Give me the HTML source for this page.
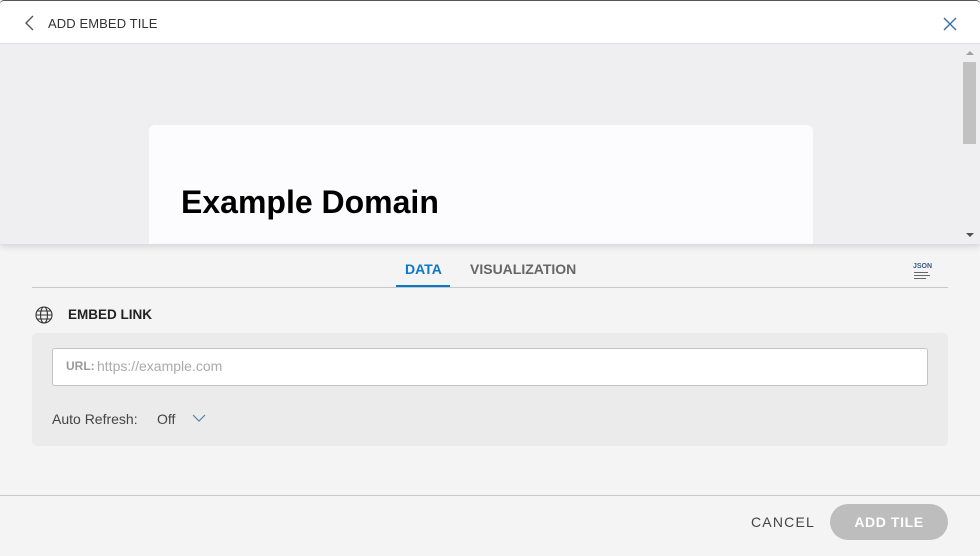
<!DOCTYPE html>
<html><head><style>
*{margin:0;padding:0;box-sizing:border-box}
body{width:980px;height:556px;overflow:hidden;background:#f4f4f4;font-family:"Liberation Sans",sans-serif;position:relative;color:#333}
.hdr{position:absolute;left:0;top:0;width:980px;height:44px;background:#fff;border-top:1px solid #555;border-radius:4px 4px 0 0;border-bottom:1px solid #e4e4e4}
.prev{position:absolute;left:0;top:44px;width:980px;height:200px;background:#efeff1;box-shadow:0 3px 6px rgba(0,0,0,.12);overflow:hidden}
.card{position:absolute;left:149px;top:81px;width:664px;height:140px;background:#fcfcfe;border-radius:6px}
.card h1{position:absolute;left:32px;top:59px;font-size:32px;font-weight:bold;color:#000;font-family:"Liberation Sans",sans-serif;letter-spacing:0}
.sb{position:absolute;left:962px;top:0;width:16px;height:200px;background:#efeff1}
.thumb{position:absolute;left:963px;top:62px;width:13px;height:82px;background:#c1c1c1}
.t{position:absolute;font-size:14px}
</style></head><body>
<div class="hdr">
<svg style="position:absolute;left:24px;top:14px" width="12" height="16"><path d="M9 1 L2 8 L9 15" fill="none" stroke="#555" stroke-width="1.4"/></svg>
<div class="t" style="left:48px;top:15px;font-size:13px;color:#333;letter-spacing:.1px">ADD EMBED TILE</div>
<svg style="position:absolute;left:943px;top:16px" width="14" height="14"><path d="M1 1L13 13M13 1L1 13" stroke="#3a6ea5" stroke-width="1.4"/></svg>
</div>
<div class="prev">
<div class="card"><h1>Example Domain</h1></div>
<div class="sb"></div>
<svg style="position:absolute;left:966px;top:6px" width="8" height="6"><path d="M0 5L4 1L8 5Z" fill="#a0a0a0"/></svg>
<svg style="position:absolute;left:966px;top:188px" width="8" height="6"><path d="M0 1L4 5L8 1Z" fill="#505050"/></svg>
</div>
<div class="thumb"></div>
<div class="t" style="left:405px;top:261px;color:#0a78c8;font-size:14px;font-weight:bold">DATA</div>
<div style="position:absolute;left:396px;top:285px;width:54px;height:3px;background:#0a78c8"></div>
<div class="t" style="left:470px;top:261px;color:#666;font-size:14px;font-weight:bold">VISUALIZATION</div>
<div style="position:absolute;left:913px;top:263px;font-size:7px;color:#3a5a8a;font-weight:bold">JSON</div>
<div style="position:absolute;left:914px;top:272px;width:14px;height:1px;background:#666"></div>
<div style="position:absolute;left:914px;top:275px;width:16px;height:1px;background:#666"></div>
<div style="position:absolute;left:914px;top:278px;width:12px;height:1px;background:#666"></div>
<div style="position:absolute;left:32px;top:287px;width:916px;height:1px;background:#c8c8c8"></div>
<svg style="position:absolute;left:35px;top:306px" width="18" height="18" viewBox="0 0 18 18" fill="none" stroke="#333" stroke-width="1.1"><circle cx="9" cy="9" r="8"/><ellipse cx="9" cy="9" rx="3.5" ry="8"/><path d="M1 9H17M2.5 5H15.5M2.5 13H15.5"/></svg>
<div class="t" style="left:68px;top:307px;color:#222;font-weight:bold;font-size:13.5px">EMBED LINK</div>
<div style="position:absolute;left:32px;top:333px;width:916px;height:113px;background:#ebebeb;border-radius:5px"></div>
<div style="position:absolute;left:52px;top:348px;width:876px;height:38px;background:#fff;border:1px solid #c4c4c4;border-radius:3px"></div>
<div class="t" style="left:66px;top:359px;font-size:12px;font-weight:bold;color:#999">URL:</div>
<div class="t" style="left:97px;top:358px;color:#aaa">https://example.com</div>
<div class="t" style="left:52px;top:411px;color:#444">Auto Refresh:</div>
<div class="t" style="left:157px;top:411px;color:#444">Off</div>
<svg style="position:absolute;left:192px;top:414px" width="14" height="8"><path d="M1 1L7 7L13 1" fill="none" stroke="#5a7fa8" stroke-width="1.2"/></svg>
<div style="position:absolute;left:0;top:495px;width:980px;height:1px;background:#c8c8c8"></div>
<div class="t" style="left:751px;top:514px;color:#444;letter-spacing:1.2px">CANCEL</div>
<div style="position:absolute;left:830px;top:504px;width:118px;height:36px;background:#bdbdbd;border-radius:18px;color:#fff;font-size:14px;font-weight:bold;text-align:center;line-height:36px;letter-spacing:.6px">ADD TILE</div>
</body></html>
